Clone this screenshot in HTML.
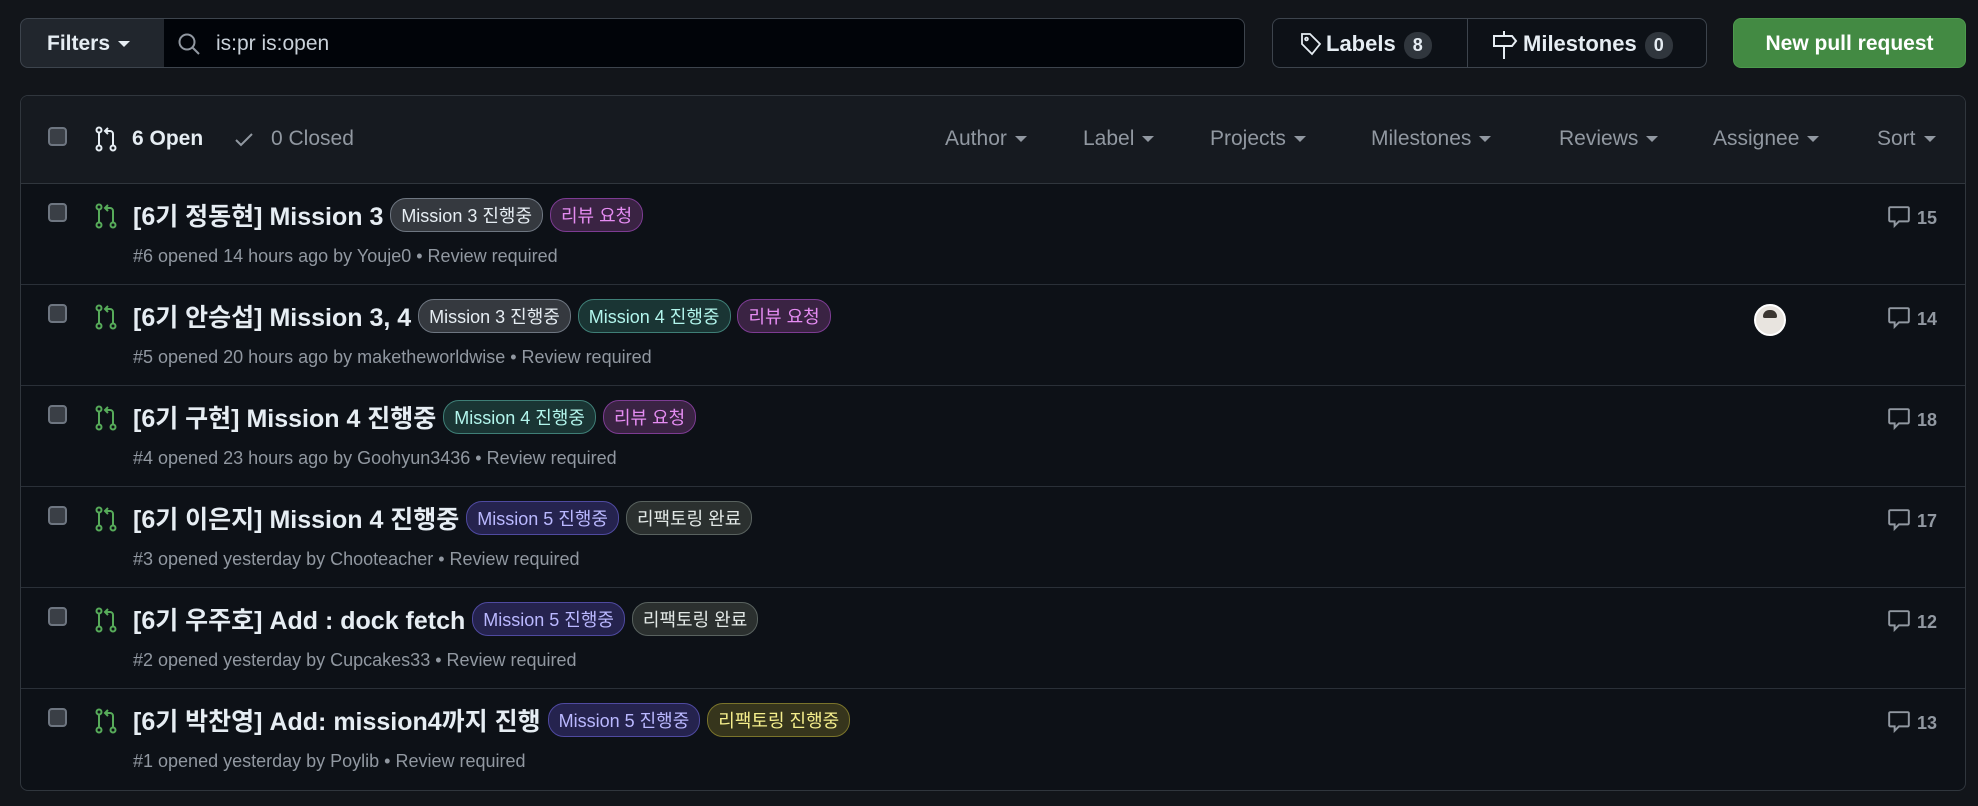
<!DOCTYPE html>
<html><head><meta charset="utf-8">
<style>
*{box-sizing:border-box;margin:0;padding:0}
body{width:1978px;height:806px;background:#12151a;font-family:"Liberation Sans","Noto Sans CJK KR",sans-serif;color:#e6edf3;position:relative;overflow:hidden}
.abs{position:absolute}
.filters{left:20px;top:18px;width:145px;height:50px;background:#21262d;border:1px solid #3d444d;border-radius:8px 0 0 8px;font-size:21px;font-weight:bold;color:#e6edf3;padding:13px 0 0 26px}
.caret{display:inline-block;width:0;height:0;border-left:6px solid transparent;border-right:6px solid transparent;border-top:6px solid currentColor;vertical-align:middle;margin-left:8px}
.search{left:164px;top:18px;width:1081px;height:50px;background:#010409;border:1px solid #3d444d;border-left:none;border-radius:0 8px 8px 0;font-size:21px;color:#c9d1d9;padding:13px 0 0 52px}
.lm{left:1272px;top:18px;width:435px;height:50px;border:1px solid #3d444d;border-radius:8px;background:#0d1117}
.lm .div{position:absolute;left:194px;top:0;bottom:0;width:1px;background:#3d444d}
.btxt{position:absolute;top:12px;font-size:22px;font-weight:bold;color:#e6edf3}
.cnt{display:inline-block;background:#30363d;border-radius:13px;padding:3px 9px;font-size:18px;margin-left:8px;vertical-align:0}
.npr{left:1733px;top:18px;width:233px;height:50px;background:#438a43;border-radius:8px;border:1px solid #4d9a4d;font-size:21px;font-weight:bold;color:#fff;text-align:center;padding-top:13px}
.box{left:20px;top:95px;width:1946px;height:696px;border:1px solid #30363d;border-radius:8px;background:#0d1117;overflow:hidden}
.hdr{position:absolute;left:0;top:0;width:100%;height:88px;background:#161a20;border-bottom:1px solid #30363d}
.cb{position:absolute;width:19px;height:19px;border:2px solid #6e7681;border-radius:4px;background:#3a3f46}
.hf{position:absolute;top:31px;font-size:21px;color:#9198a1}
.row{position:absolute;left:0;width:100%;height:101px;border-bottom:1px solid #2a3038}
.title{position:absolute;left:112px;top:13px;font-size:25px;font-weight:bold;color:#e6edf3;white-space:nowrap}
.lbl{display:inline-block;font-size:18px;font-weight:normal;padding:3px 10px;border-radius:16px;border:1px solid;margin-left:0;vertical-align:3px}
.meta{position:absolute;left:112px;top:62px;font-size:18px;color:#9198a1;white-space:nowrap}
.cm{position:absolute;right:28px;top:21px;font-size:18px;color:#9198a1;font-weight:bold}
.g{background:#35393f;border-color:#6e7681;color:#e6edf3}
.p{background:#3a2343;border-color:#7d3c93;color:#e58cf2}
.t{background:#1a3534;border-color:#3f7f77;color:#b2f5ec}
.i{background:#25234e;border-color:#4f4aa0;color:#bab8ff}
.r{background:#2b302f;border-color:#59625f;color:#e2e8e6}
.y{background:#36351c;border-color:#7a742b;color:#f5ee8c}
</style></head><body>
<div class="abs filters">Filters<span class="caret"></span></div>
<div class="abs search">is:pr is:open
<svg class="abs" style="left:13px;top:13px" width="24" height="24" viewBox="0 0 24 24" fill="none" stroke="#9198a1" stroke-width="2"><circle cx="10" cy="10" r="7.5"/><path d="M15.5 15.5L22 22"/></svg></div>
<div class="abs lm"><div class="div"></div>
<svg class="abs" style="left:27px;top:13px" width="22" height="24" viewBox="0 0 22 24" fill="none" stroke="#e6edf3" stroke-width="1.8"><path d="M2 2h8l10 10-8 10L2 12z"/><circle cx="6.5" cy="7" r="1.4"/></svg>
<div class="btxt" style="left:53px">Labels<span class="cnt">8</span></div>
<svg class="abs" style="left:219px;top:11px" width="26" height="30" viewBox="0 0 26 30" fill="none" stroke="#e6edf3" stroke-width="2"><path d="M2 6h18l4 5-4 5H2z"/><path d="M12 1v5M12 16v13"/></svg>
<div class="btxt" style="left:250px">Milestones<span class="cnt">0</span></div></div>
<div class="abs npr">New pull request</div>

<div class="abs box">
<div class="hdr">
<div class="cb" style="left:27px;top:31px"></div>
<svg class="abs" style="left:74px;top:30px" width="22" height="26" viewBox="0 0 22 26" fill="none" stroke="#e6edf3" stroke-width="2"><circle cx="4" cy="4" r="2.5"/><circle cx="4" cy="22" r="2.5"/><circle cx="18" cy="22" r="2.5"/><path d="M4 6.5v13M18 19.5V8a3 3 0 0 0-3-3h-4M13 2l-3 3 3 3"/></svg>
<div class="hf" style="left:111px;color:#e6edf3;font-weight:bold">6 Open</div>
<svg class="abs" style="left:213px;top:36px" width="20" height="16" viewBox="0 0 20 16" fill="none" stroke="#9198a1" stroke-width="2"><path d="M2 8l5 5L18 2"/></svg>
<div class="hf" style="left:250px">0 Closed</div>
<div class="hf" style="left:924px">Author<span class="caret"></span></div>
<div class="hf" style="left:1062px">Label<span class="caret"></span></div>
<div class="hf" style="left:1189px">Projects<span class="caret"></span></div>
<div class="hf" style="left:1350px">Milestones<span class="caret"></span></div>
<div class="hf" style="left:1538px">Reviews<span class="caret"></span></div>
<div class="hf" style="left:1692px">Assignee<span class="caret"></span></div>
<div class="hf" style="left:1856px">Sort<span class="caret"></span></div>
</div>

<div class="row" style="top:88px">
<div class="cb" style="left:27px;top:19px"></div>
<svg class="abs" style="left:74px;top:19px" width="22" height="26" viewBox="0 0 22 26" fill="none" stroke="#57ab5a" stroke-width="2"><circle cx="4" cy="4" r="2.5"/><circle cx="4" cy="22" r="2.5"/><circle cx="18" cy="22" r="2.5"/><path d="M4 6.5v13M18 19.5V8a3 3 0 0 0-3-3h-4M13 2l-3 3 3 3"/></svg>
<div class="title">[6기 정동현] Mission 3 <span class="lbl g">Mission 3 진행중</span> <span class="lbl p">리뷰 요청</span></div>
<div class="meta">#6 opened 14 hours ago by Youje0 • Review required</div>
<div class="cm"><svg width="24" height="24" viewBox="0 0 22 22" fill="none" stroke="#9198a1" stroke-width="1.8" style="vertical-align:-5px;margin-right:6px"><path d="M3 2h16a1 1 0 0 1 1 1v11a1 1 0 0 1-1 1h-8l-4 4v-4H3a1 1 0 0 1-1-1V3a1 1 0 0 1 1-1z"/></svg>15</div>
</div>

<div class="row" style="top:189px">
<div class="cb" style="left:27px;top:19px"></div>
<svg class="abs" style="left:74px;top:19px" width="22" height="26" viewBox="0 0 22 26" fill="none" stroke="#57ab5a" stroke-width="2"><circle cx="4" cy="4" r="2.5"/><circle cx="4" cy="22" r="2.5"/><circle cx="18" cy="22" r="2.5"/><path d="M4 6.5v13M18 19.5V8a3 3 0 0 0-3-3h-4M13 2l-3 3 3 3"/></svg>
<div class="title">[6기 안승섭] Mission 3, 4 <span class="lbl g">Mission 3 진행중</span> <span class="lbl t">Mission 4 진행중</span> <span class="lbl p">리뷰 요청</span></div>
<div class="meta">#5 opened 20 hours ago by maketheworldwise • Review required</div>
<div class="abs" style="left:1733px;top:19px;width:32px;height:32px;border-radius:50%;background:#e8e4df;border:2px solid #fff"><div style="position:absolute;left:7px;top:4px;width:14px;height:8px;border-radius:7px 7px 2px 2px;background:#3a3530"></div></div>
<div class="cm"><svg width="24" height="24" viewBox="0 0 22 22" fill="none" stroke="#9198a1" stroke-width="1.8" style="vertical-align:-5px;margin-right:6px"><path d="M3 2h16a1 1 0 0 1 1 1v11a1 1 0 0 1-1 1h-8l-4 4v-4H3a1 1 0 0 1-1-1V3a1 1 0 0 1 1-1z"/></svg>14</div>
</div>

<div class="row" style="top:290px">
<div class="cb" style="left:27px;top:19px"></div>
<svg class="abs" style="left:74px;top:19px" width="22" height="26" viewBox="0 0 22 26" fill="none" stroke="#57ab5a" stroke-width="2"><circle cx="4" cy="4" r="2.5"/><circle cx="4" cy="22" r="2.5"/><circle cx="18" cy="22" r="2.5"/><path d="M4 6.5v13M18 19.5V8a3 3 0 0 0-3-3h-4M13 2l-3 3 3 3"/></svg>
<div class="title">[6기 구현] Mission 4 진행중 <span class="lbl t">Mission 4 진행중</span> <span class="lbl p">리뷰 요청</span></div>
<div class="meta">#4 opened 23 hours ago by Goohyun3436 • Review required</div>
<div class="cm"><svg width="24" height="24" viewBox="0 0 22 22" fill="none" stroke="#9198a1" stroke-width="1.8" style="vertical-align:-5px;margin-right:6px"><path d="M3 2h16a1 1 0 0 1 1 1v11a1 1 0 0 1-1 1h-8l-4 4v-4H3a1 1 0 0 1-1-1V3a1 1 0 0 1 1-1z"/></svg>18</div>
</div>

<div class="row" style="top:391px">
<div class="cb" style="left:27px;top:19px"></div>
<svg class="abs" style="left:74px;top:19px" width="22" height="26" viewBox="0 0 22 26" fill="none" stroke="#57ab5a" stroke-width="2"><circle cx="4" cy="4" r="2.5"/><circle cx="4" cy="22" r="2.5"/><circle cx="18" cy="22" r="2.5"/><path d="M4 6.5v13M18 19.5V8a3 3 0 0 0-3-3h-4M13 2l-3 3 3 3"/></svg>
<div class="title">[6기 이은지] Mission 4 진행중 <span class="lbl i">Mission 5 진행중</span> <span class="lbl r">리팩토링 완료</span></div>
<div class="meta">#3 opened yesterday by Chooteacher • Review required</div>
<div class="cm"><svg width="24" height="24" viewBox="0 0 22 22" fill="none" stroke="#9198a1" stroke-width="1.8" style="vertical-align:-5px;margin-right:6px"><path d="M3 2h16a1 1 0 0 1 1 1v11a1 1 0 0 1-1 1h-8l-4 4v-4H3a1 1 0 0 1-1-1V3a1 1 0 0 1 1-1z"/></svg>17</div>
</div>

<div class="row" style="top:492px">
<div class="cb" style="left:27px;top:19px"></div>
<svg class="abs" style="left:74px;top:19px" width="22" height="26" viewBox="0 0 22 26" fill="none" stroke="#57ab5a" stroke-width="2"><circle cx="4" cy="4" r="2.5"/><circle cx="4" cy="22" r="2.5"/><circle cx="18" cy="22" r="2.5"/><path d="M4 6.5v13M18 19.5V8a3 3 0 0 0-3-3h-4M13 2l-3 3 3 3"/></svg>
<div class="title">[6기 우주호] Add : dock fetch <span class="lbl i">Mission 5 진행중</span> <span class="lbl r">리팩토링 완료</span></div>
<div class="meta">#2 opened yesterday by Cupcakes33 • Review required</div>
<div class="cm"><svg width="24" height="24" viewBox="0 0 22 22" fill="none" stroke="#9198a1" stroke-width="1.8" style="vertical-align:-5px;margin-right:6px"><path d="M3 2h16a1 1 0 0 1 1 1v11a1 1 0 0 1-1 1h-8l-4 4v-4H3a1 1 0 0 1-1-1V3a1 1 0 0 1 1-1z"/></svg>12</div>
</div>

<div class="row" style="top:593px;border-bottom:none">
<div class="cb" style="left:27px;top:19px"></div>
<svg class="abs" style="left:74px;top:19px" width="22" height="26" viewBox="0 0 22 26" fill="none" stroke="#57ab5a" stroke-width="2"><circle cx="4" cy="4" r="2.5"/><circle cx="4" cy="22" r="2.5"/><circle cx="18" cy="22" r="2.5"/><path d="M4 6.5v13M18 19.5V8a3 3 0 0 0-3-3h-4M13 2l-3 3 3 3"/></svg>
<div class="title">[6기 박찬영] Add: mission4까지 진행 <span class="lbl i">Mission 5 진행중</span> <span class="lbl y">리팩토링 진행중</span></div>
<div class="meta">#1 opened yesterday by Poylib • Review required</div>
<div class="cm"><svg width="24" height="24" viewBox="0 0 22 22" fill="none" stroke="#9198a1" stroke-width="1.8" style="vertical-align:-5px;margin-right:6px"><path d="M3 2h16a1 1 0 0 1 1 1v11a1 1 0 0 1-1 1h-8l-4 4v-4H3a1 1 0 0 1-1-1V3a1 1 0 0 1 1-1z"/></svg>13</div>
</div>
</div>
</body></html>
